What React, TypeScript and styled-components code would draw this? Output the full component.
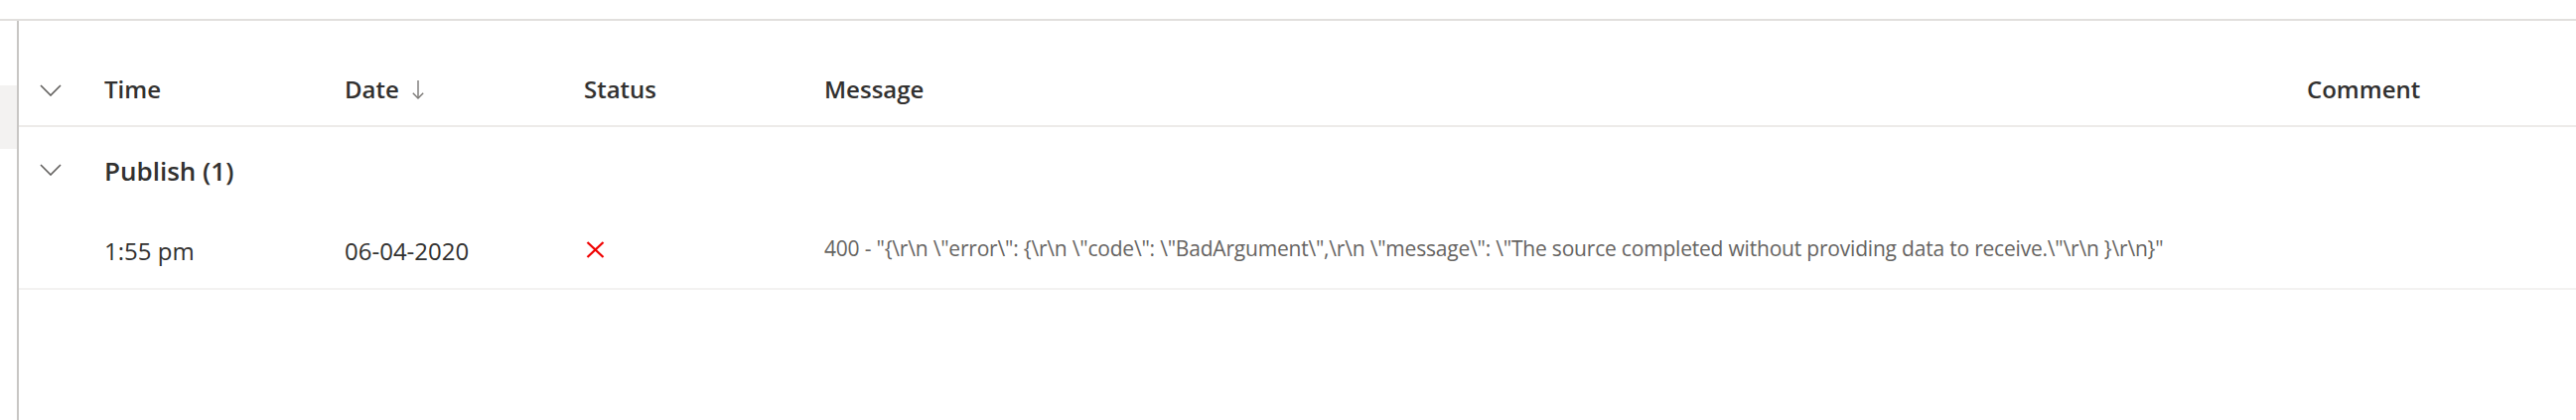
import React from "react";
import styled, { createGlobalStyle } from "styled-components";

interface LogRow {
  time: string;
  date: string;
  failed: boolean;
  message: string;
  comment: string;
}

interface Group {
  name: string;
  rows: LogRow[];
}

const groups: Group[] = [
  {
    name: "Publish",
    rows: [
      {
        time: "1:55 pm",
        date: "06-04-2020",
        failed: true,
        message:
          '400 - "{\\r\\n \\"error\\": {\\r\\n \\"code\\": \\"BadArgument\\",\\r\\n \\"message\\": \\"The source completed without providing data to receive.\\"\\r\\n }\\r\\n}"',
        comment: "",
      },
    ],
  },
];

const columns = ["Time", "Date", "Status", "Message", "Comment"];

const GlobalStyle = createGlobalStyle`
  html, body {
    margin: 0;
    padding: 0;
    background: #ffffff;
    height: 100%;
  }
  body {
    font-family: "Open Sans", "Noto Sans", sans-serif;
    color: #323130;
    overflow: hidden;
  }
  #root {
    height: 100%;
  }
`;

const Chevron = () => (
  <svg width="22" height="12" viewBox="0 0 22 12">
    <polyline
      points="1,1 11,11 21,1"
      fill="none"
      stroke="#605e5c"
      strokeWidth="1.6"
    />
  </svg>
);

const SortDown = () => (
  <svg width="12" height="19" viewBox="0 0 12 19">
    <line x1="6" y1="0" x2="6" y2="18" stroke="#797775" strokeWidth="1.4" />
    <polyline
      points="0.8,12.8 6,18 11.2,12.8"
      fill="none"
      stroke="#797775"
      strokeWidth="1.4"
    />
  </svg>
);

const Cancel = () => (
  <svg width="19" height="17" viewBox="0 0 19 17">
    <line x1="1.5" y1="1" x2="17.5" y2="16" stroke="#f00000" strokeWidth="2.2" />
    <line x1="17.5" y1="1" x2="1.5" y2="16" stroke="#f00000" strokeWidth="2.2" />
  </svg>
);

export default function App() {
  return (
    <>
      <GlobalStyle />
      <Page>
        <TopStrip />
        <Body>
          <Sidebar>
            <NavSelected />
          </Sidebar>
          <Main>
            <HeaderRow>
              <ExpandCell>
                <Chevron />
              </ExpandCell>
              {columns.map((c) => (
                <HeaderCell key={c}>
                  {c}
                  {c === "Date" && (
                    <SortIcon>
                      <SortDown />
                    </SortIcon>
                  )}
                </HeaderCell>
              ))}
            </HeaderRow>
            {groups.map((g) => (
              <React.Fragment key={g.name}>
                <GroupRow>
                  <ExpandCell>
                    <Chevron />
                  </ExpandCell>
                  <GroupTitle>
                    {g.name} ({g.rows.length})
                  </GroupTitle>
                </GroupRow>
                {g.rows.map((r, i) => (
                  <DataRow key={i}>
                    <ExpandCell />
                    <Cell>{r.time}</Cell>
                    <Cell>{r.date}</Cell>
                    <Cell>
                      {r.failed && (
                        <StatusIcon>
                          <Cancel />
                        </StatusIcon>
                      )}
                    </Cell>
                    <MessageCell>{r.message}</MessageCell>
                    <Cell>{r.comment}</Cell>
                  </DataRow>
                ))}
              </React.Fragment>
            ))}
          </Main>
        </Body>
      </Page>
    </>
  );
}

const Page = styled.div`
  display: flex;
  flex-direction: column;
  height: 100%;
`;

const TopStrip = styled.div`
  height: 19px;
  border-bottom: 2px solid #e1dfdd;
  flex-shrink: 0;
`;

const Body = styled.div`
  display: flex;
  flex: 1;
`;

const Sidebar = styled.div`
  width: 17px;
  border-right: 2px solid #c8c6c4;
  padding-top: 65px;
  flex-shrink: 0;
`;

const NavSelected = styled.div`
  height: 64px;
  background: #f3f2f1;
`;

const Main = styled.div`
  flex: 1;
  padding-top: 34px;
`;

const gridCols = "86px 242px 241px 242px 1493px 1fr";

const HeaderRow = styled.div`
  display: grid;
  grid-template-columns: ${gridCols};
  height: 71px;
  align-items: center;
  border-bottom: 2px solid #edebe9;
`;

const ExpandCell = styled.div`
  display: flex;
  align-items: center;
  width: 86px;
  box-sizing: border-box;
  padding-left: 21px;
  padding-top: 1px;
`;

const HeaderCell = styled.div`
  display: flex;
  align-items: center;
  font-size: 24px;
  font-weight: 600;
  color: #323130;
  white-space: nowrap;
  padding-bottom: 3px;
`;

const SortIcon = styled.span`
  display: inline-flex;
  margin-left: 13px;
  margin-top: 2px;
`;

const GroupRow = styled.div`
  display: flex;
  align-items: center;
  height: 84px;
`;

const GroupTitle = styled.div`
  font-size: 26px;
  font-weight: 600;
  color: #323130;
  padding-top: 4px;
`;

const DataRow = styled.div`
  display: grid;
  grid-template-columns: ${gridCols};
  height: 78px;
  align-items: center;
  border-bottom: 2px solid #f3f2f1;
`;

const Cell = styled.div`
  font-size: 24px;
  color: #323130;
  white-space: nowrap;
  padding-top: 2px;
`;

const MessageCell = styled.div`
  font-size: 21px;
  color: #666462;
  white-space: nowrap;
  overflow: visible;
  letter-spacing: -0.2px;
  padding-bottom: 2px;
`;

const StatusIcon = styled.span`
  display: inline-flex;
  margin-left: 2px;
  margin-bottom: 10px;
`;
